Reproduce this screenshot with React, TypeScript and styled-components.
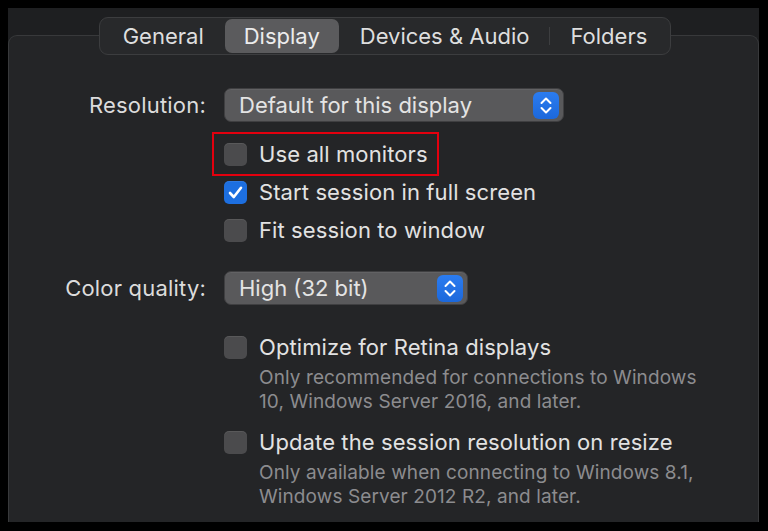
import { FC } from 'react';
import styled, { createGlobalStyle } from 'styled-components';

const GlobalStyle = createGlobalStyle`
    html, body {
        margin: 0;
        padding: 0;
        background: #000;
    }
    body {
        font-family: Inter, "Noto Sans", "Liberation Sans", sans-serif;
        -webkit-font-smoothing: antialiased;
    }
`;

const Frame = styled.div`
    width: 768px;
    height: 531px;
    box-sizing: border-box;
    padding: 8px 9px 9px 8px;
    background: #000;
`;

const Window = styled.div`
    height: 100%;
    background: #1e1f21;
    display: flex;
    flex-direction: column;
`;

const TabRow = styled.div`
    display: flex;
    justify-content: center;
    padding: 9px 0 0 3px;
    position: relative;
    z-index: 1;
`;

const Segmented = styled.div`
    display: flex;
    align-items: center;
    height: 38px;
    box-sizing: border-box;
    padding: 0 3px;
    background: #28292b;
    border: 1px solid #3c3d3f;
    border-radius: 9px;
`;

const Segment = styled.div<{ $active?: boolean }>`
    height: 34px;
    display: flex;
    align-items: center;
    padding: 0 19px;
    border-radius: 7px;
    font-size: 22px;
    color: ${(p) => (p.$active ? '#ececec' : '#dedede')};
    background: ${(p) => (p.$active ? '#5b5b5d' : 'transparent')};
    margin: 0 1px;
`;

const Divider = styled.div`
    width: 1px;
    height: 18px;
    background: #3d3e40;
`;

const Panel = styled.div`
    flex: 1;
    margin-top: -20px;
    background: #242527;
    border: 1px solid #38393b;
    border-bottom: none;
    border-radius: 9px 9px 0 0;
    padding-top: 52px;
    display: flex;
    flex-direction: column;
`;

const FormRow = styled.div<{ $mt?: number }>`
    display: grid;
    grid-template-columns: 197px 1fr;
    column-gap: 18px;
    align-items: center;
    margin-top: ${(p) => p.$mt ?? 0}px;
`;

const Label = styled.div`
    text-align: right;
    font-size: 22px;
    letter-spacing: 0.2px;
    color: #dcdcdc;
`;

const Popup = styled.div<{ $width: number }>`
    width: ${(p) => p.$width}px;
    height: 34px;
    box-sizing: border-box;
    display: flex;
    align-items: center;
    justify-content: space-between;
    padding: 0 4px 0 14px;
    background: #59595b;
    border: 1px solid #3f3f41;
    border-radius: 7px;
    font-size: 22px;
    color: #e4e4e4;
    box-shadow: inset 0 1px 0 rgba(255, 255, 255, 0.06);
`;

const Stepper = styled.div`
    width: 26px;
    height: 27px;
    border-radius: 6px;
    background: linear-gradient(#2b7cf0, #1c68db);
    display: flex;
    align-items: center;
    justify-content: center;
`;

const Options = styled.div`
    grid-column: 2;
    display: flex;
    flex-direction: column;
    align-items: flex-start;
`;

const CheckRow = styled.div<{ $highlight?: boolean }>`
    position: relative;
    display: inline-flex;
    align-items: center;
    gap: 12px;
    height: 38px;
    font-size: 22px;
    letter-spacing: 0.1px;
    color: #e2e2e2;

    ${(p) =>
        p.$highlight &&
        `
        &::after {
            content: '';
            position: absolute;
            left: -12px;
            right: -11px;
            top: -3px;
            bottom: -3px;
            border: 2px solid #e3000e;
        }
    `}
`;

const Box = styled.div<{ $checked?: boolean }>`
    width: 23px;
    height: 23px;
    flex: none;
    box-sizing: border-box;
    border-radius: 5px;
    display: flex;
    align-items: center;
    justify-content: center;
    background: ${(p) => (p.$checked ? '#1d6fe0' : '#4b4b4d')};
    box-shadow: inset 0 1px 0 rgba(255, 255, 255, 0.08);
`;

const Description = styled.div`
    padding-left: 35px;
    font-size: 19px;
    letter-spacing: 0.1px;
    line-height: 24px;
    color: #8c8c8f;
`;

const Chevrons = () => (
    <svg width="26" height="27" viewBox="0 0 26 27">
        <path d="M8.5 11 L13 6.5 L17.5 11" stroke="#fff" strokeWidth="2" fill="none" strokeLinecap="round" strokeLinejoin="round" />
        <path d="M8.5 16 L13 20.5 L17.5 16" stroke="#fff" strokeWidth="2" fill="none" strokeLinecap="round" strokeLinejoin="round" />
    </svg>
);

const Tick = () => (
    <svg width="23" height="23" viewBox="0 0 23 23">
        <path d="M6 12 L9.8 16 L17 6.8" stroke="#fff" strokeWidth="2.6" fill="none" strokeLinecap="round" strokeLinejoin="round" />
    </svg>
);

interface CheckProps {
    label: string;
    checked?: boolean;
    highlight?: boolean;
}

const Check: FC<CheckProps> = ({ label, checked, highlight }) => (
    <CheckRow $highlight={highlight}>
        <Box $checked={checked}>{checked && <Tick />}</Box>
        {label}
    </CheckRow>
);

export default function App() {
    return (
        <>
            <GlobalStyle />
            <Frame>
                <Window>
                    <TabRow>
                        <Segmented>
                            <Segment>General</Segment>
                            <Segment $active>Display</Segment>
                            <Segment>Devices &amp; Audio</Segment>
                            <Divider />
                            <Segment>Folders</Segment>
                        </Segmented>
                    </TabRow>
                    <Panel>
                        <FormRow>
                            <Label>Resolution:</Label>
                            <Popup $width={340}>
                                Default for this display
                                <Stepper><Chevrons /></Stepper>
                            </Popup>
                        </FormRow>
                        <FormRow $mt={13}>
                            <Options>
                                <Check label="Use all monitors" highlight />
                                <Check label="Start session in full screen" checked />
                                <Check label="Fit session to window" />
                            </Options>
                        </FormRow>
                        <FormRow $mt={22}>
                            <Label>Color quality:</Label>
                            <Popup $width={244}>
                                High (32 bit)
                                <Stepper><Chevrons /></Stepper>
                            </Popup>
                        </FormRow>
                        <FormRow $mt={23}>
                            <Options>
                                <Check label="Optimize for Retina displays" />
                                <Description>
                                    Only recommended for connections to Windows
                                    <br />
                                    10, Windows Server 2016, and later.
                                </Description>
                            </Options>
                        </FormRow>
                        <FormRow $mt={9}>
                            <Options>
                                <Check label="Update the session resolution on resize" />
                                <Description>
                                    Only available when connecting to Windows 8.1,
                                    <br />
                                    Windows Server 2012 R2, and later.
                                </Description>
                            </Options>
                        </FormRow>
                    </Panel>
                </Window>
            </Frame>
        </>
    );
}
